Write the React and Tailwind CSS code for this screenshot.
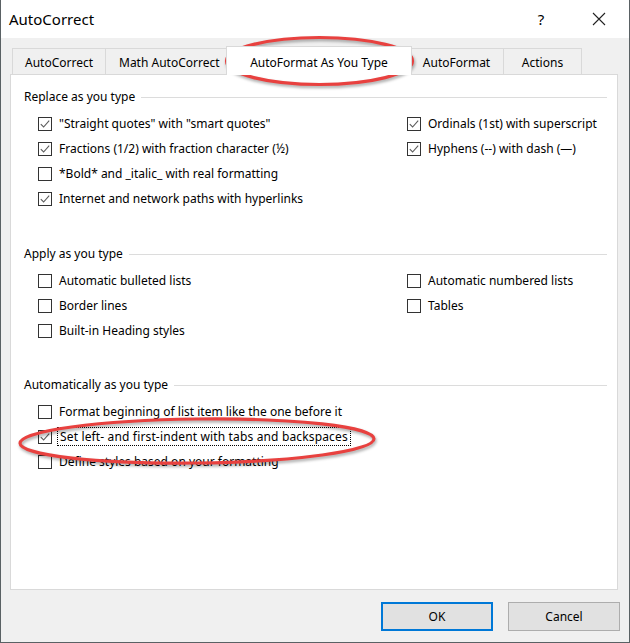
import React from "react";

const FONT = { fontFamily: '"Noto Sans", "Open Sans", sans-serif' };

function Box({ checked }) {
  return (
    <span className="w-[14px] h-[14px] border border-[#333333] bg-white flex items-center justify-center shrink-0">
      {checked && (
        <svg width="12" height="12" viewBox="0 0 12 12">
          <path d="M1.8 6.2 L4.6 9 L10.2 2.6" fill="none" stroke="#5c5c5c" strokeWidth="1.1" />
        </svg>
      )}
    </span>
  );
}

function Row({ checked, children, focus }) {
  return (
    <div className="h-[25px] flex items-center">
      <Box checked={checked} />
      {focus ? (
        <span className="ml-[5px] px-[2px] leading-[17px] border border-dotted border-black tracking-[0.15px]">{children}</span>
      ) : (
        <span className="ml-[7px]">{children}</span>
      )}
    </div>
  );
}

function GroupLabel({ children, className }) {
  return (
    <div className={"flex items-center h-[16px] pl-[13px] pr-[10px] " + (className || "")}>
      <span className="whitespace-nowrap">{children}</span>
      <div className="flex-1 h-px bg-[#dcdcdc] ml-[6px]" />
    </div>
  );
}

export default function App() {
  return (
    <div
      className="relative w-[630px] h-[643px] bg-[#f0f0f0] border-l border-r border-b border-[#5a6164] text-[12px] text-black overflow-hidden"
      style={FONT}
    >
      {/* Title bar */}
      <div className="h-[38px] bg-white flex items-center">
        <span className="ml-[8px] text-[15px]">AutoCorrect</span>
        <div className="flex-1" />
        <span className="text-[15px] w-[20px] text-center mr-[41px]">?</span>
        <svg width="14" height="14" viewBox="0 0 14 14" className="mr-[23px]">
          <path d="M1 1 L13 13 M13 1 L1 13" stroke="#222" strokeWidth="1.1" />
        </svg>
      </div>

      {/* Tabs */}
      <div className="h-[36px] flex items-end pl-[11px]">
        <div className="w-[94px] h-[26px] pt-[3px] border border-b-0 border-[#d9d9d9] flex items-center justify-center">AutoCorrect</div>
        <div className="w-[122px] h-[26px] pt-[3px] pl-[13px] border border-b-0 border-l-0 border-[#d9d9d9] flex items-center justify-start overflow-hidden whitespace-nowrap">Math AutoCorrect</div>
        <div className="relative z-10 -ml-[2px] w-[186px] h-[29px] -mb-px pt-[3px] bg-white border border-b-0 border-[#d9d9d9] flex items-center justify-center">AutoFormat As You Type</div>
        <div className="-ml-[2px] w-[94px] h-[26px] pt-[3px] border border-b-0 border-l-0 border-[#d9d9d9] flex items-center justify-center">AutoFormat</div>
        <div className="w-[78px] h-[26px] pt-[3px] border border-b-0 border-l-0 border-[#d9d9d9] flex items-center justify-center">Actions</div>
      </div>

      {/* Panel */}
      <div className="ml-[9px] w-[608px] h-[516px] bg-white border border-[#d9d9d9]">
        <GroupLabel className="mt-[14px]">Replace as you type</GroupLabel>
        <div className="mt-[6px] pl-[27px] grid grid-cols-[369px_1fr]">
          <div>
            <Row checked>"Straight quotes" with "smart quotes"</Row>
            <Row checked>Fractions (1/2) with fraction character (½)</Row>
            <Row>*Bold* and _italic_ with real formatting</Row>
            <Row checked>Internet and network paths with hyperlinks</Row>
          </div>
          <div>
            <Row checked>Ordinals (1st) with superscript</Row>
            <Row checked>Hyphens (--) with dash (—)</Row>
          </div>
        </div>

        <GroupLabel className="mt-[35px]">Apply as you type</GroupLabel>
        <div className="mt-[6px] pl-[27px] grid grid-cols-[369px_1fr]">
          <div>
            <Row>Automatic bulleted lists</Row>
            <Row>Border lines</Row>
            <Row>Built-in Heading styles</Row>
          </div>
          <div>
            <Row>Automatic numbered lists</Row>
            <Row>Tables</Row>
          </div>
        </div>

        <GroupLabel className="mt-[34px]">Automatically as you type</GroupLabel>
        <div className="mt-[6px] pl-[27px]">
          <Row>Format beginning of list item like the one before it</Row>
          <Row checked focus>Set left- and first-indent with tabs and backspaces</Row>
          <Row>Define styles based on your formatting</Row>
        </div>
      </div>

      {/* Buttons */}
      <div className="flex justify-end gap-[15px] mt-[12px] mr-[9px]">
        <button className="w-[112px] h-[29px] bg-[#e1e1e1] border-2 border-[#0078d7] text-[12px]">OK</button>
        <button className="w-[112px] h-[29px] bg-[#e1e1e1] border border-[#adadad] text-[12px]">Cancel</button>
      </div>

      {/* Annotation ellipses */}
      <svg
        className="absolute left-0 top-0 pointer-events-none"
        width="630"
        height="643"
        viewBox="0 0 630 643"
        style={{ filter: "drop-shadow(1px 2px 1.5px rgba(0,0,0,0.35))" }}
      >
        <ellipse cx="318.5" cy="61" rx="93" ry="23.5" fill="none" stroke="#e8413f" strokeWidth="3.2" />
        <ellipse cx="196" cy="441" rx="177" ry="22" fill="none" stroke="#e8413f" strokeWidth="3.2" transform="rotate(-0.7 196 441)" />
      </svg>
    </div>
  );
}
